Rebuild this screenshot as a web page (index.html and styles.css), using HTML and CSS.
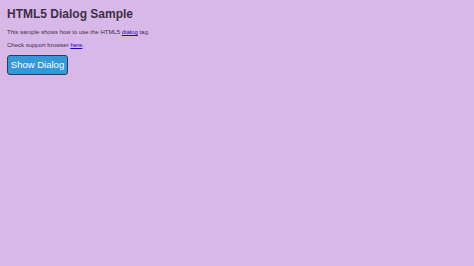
FILE: index.html
```html
<!DOCTYPE html>
<html lang="en">
<head>
    <meta charset="UTF-8">
    <title>HTML5 Dialog Sample</title>
    <link rel="stylesheet" href="styles.css">
</head>
<body>
    <h1>HTML5 Dialog Sample</h1>
    <p>This sample shows how to use the HTML5 <a href="#">dialog</a> tag.</p>
    <p>Check support browser <a href="#">here</a>.</p>
    <button class="show-btn">Show Dialog</button>
</body>
</html>
```
FILE: styles.css
```css
body {
    font-family: "Liberation Sans", Arial, sans-serif;
    margin: 0;
    padding: 7px;
    background-color: #d8b8e8;
    color: #3d3045;
}

h1 {
    font-size: 12px;
    margin: 0 0 7px 0;
    line-height: 14px;
}

p {
    font-size: 6px;
    margin: 0 0 5px 0;
    line-height: 8px;
}

a {
    color: #2200cc;
}

.show-btn {
    background-color: #3498db;
    color: #fff;
    font-family: "Liberation Sans", Arial, sans-serif;
    font-size: 9.5px;
    padding: 0;
    white-space: nowrap;
    border: 1px solid #2c3e50;
    border-radius: 3px;
    height: 20px;
    width: 61px;
}
```
